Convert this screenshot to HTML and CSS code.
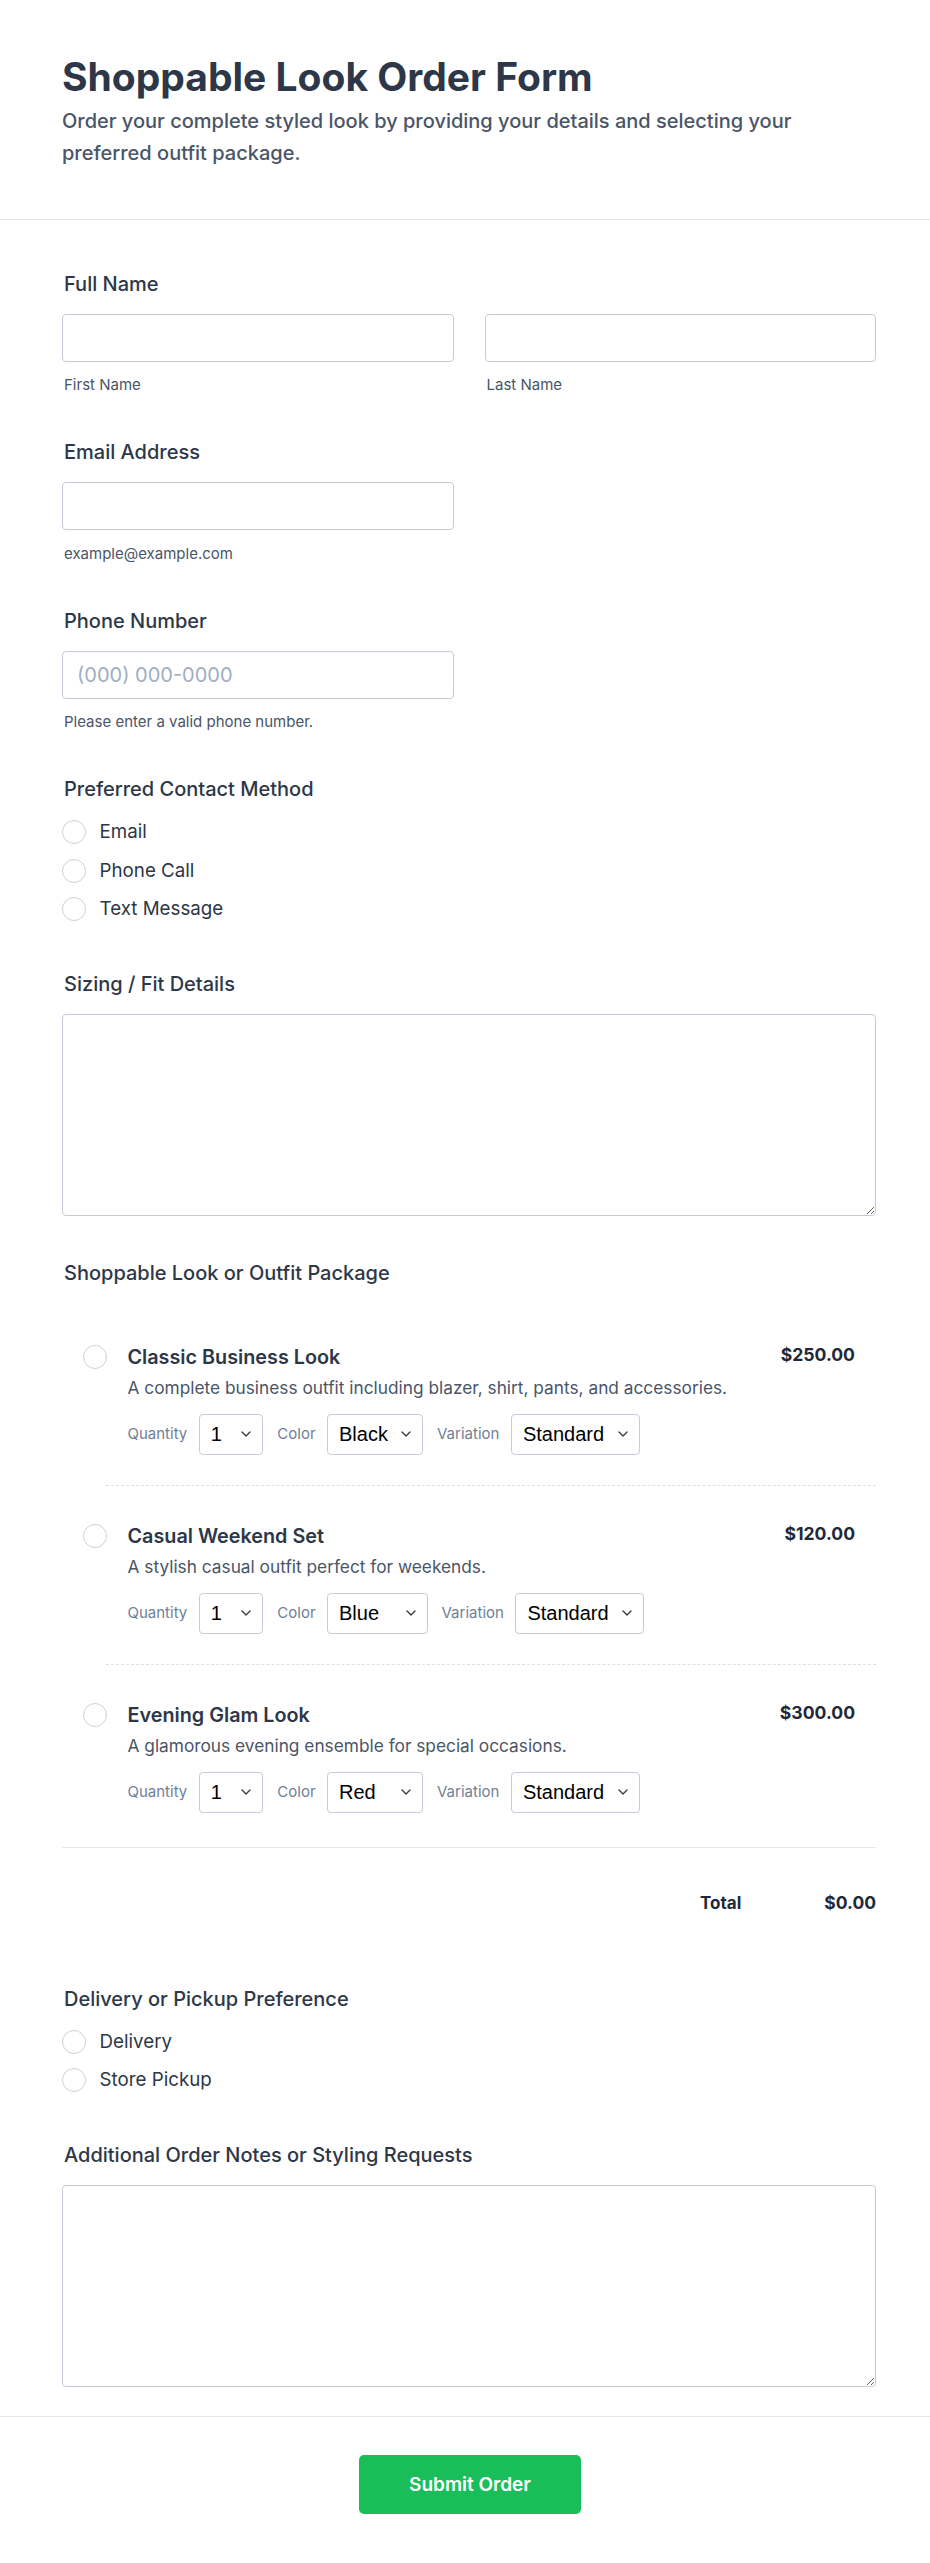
FILE: index.html
```html
<!DOCTYPE html>
<html lang="en">
<head>
<meta charset="utf-8">
<title>Shoppable Look Order Form</title>
<link rel="stylesheet" href="styles.css">
</head>
<body>
<header class="hdr">
  <h1 class="title">Shoppable Look Order Form</h1>
  <p class="subtitle">Order your complete styled look by providing your details and selecting your preferred outfit package.</p>
</header>

<form class="form">
  <div class="field">
    <label class="label">Full Name</label>
    <div class="grid2">
      <div>
        <input class="input" type="text">
        <div class="sub">First Name</div>
      </div>
      <div>
        <input class="input" type="text">
        <div class="sub">Last Name</div>
      </div>
    </div>
  </div>

  <div class="field">
    <label class="label">Email Address</label>
    <input class="input half" type="email">
    <div class="sub">example@example.com</div>
  </div>

  <div class="field">
    <label class="label">Phone Number</label>
    <input class="input half" type="tel" placeholder="(000) 000-0000">
    <div class="sub">Please enter a valid phone number.</div>
  </div>

  <div class="field field-radios">
    <label class="label">Preferred Contact Method</label>
    <div class="radios">
      <label class="radio-row"><input class="radio" type="radio" name="contact"><span>Email</span></label>
      <label class="radio-row"><input class="radio" type="radio" name="contact"><span>Phone Call</span></label>
      <label class="radio-row"><input class="radio" type="radio" name="contact"><span>Text Message</span></label>
    </div>
  </div>

  <div class="field">
    <label class="label">Sizing / Fit Details</label>
    <textarea class="textarea"></textarea>
  </div>

  <div class="field field-package">
    <label class="label">Shoppable Look or Outfit Package</label>
    <div class="items">
      <div class="item">
        <input class="radio item-radio" type="radio" name="look">
        <div class="item-body">
          <div class="item-head">
            <span class="item-title">Classic Business Look</span>
            <span class="item-price">$250.00</span>
          </div>
          <div class="item-desc">A complete business outfit including blazer, shirt, pants, and accessories.</div>
          <div class="opts">
            <div class="opt"><span class="opt-label">Quantity</span>
              <span class="sel-wrap"><select class="sel sel-qty"><option>1</option><option>2</option><option>3</option></select><svg class="chev" width="10" height="6" viewBox="0 0 10 6"><polyline points="1,1 5,5 9,1" fill="none" stroke="#3c3c3c" stroke-width="1.4" stroke-linecap="round" stroke-linejoin="round"/></svg></span></div>
            <div class="opt"><span class="opt-label">Color</span>
              <span class="sel-wrap"><select class="sel sel-color"><option>Black</option><option>Navy</option><option>Gray</option></select><svg class="chev" width="10" height="6" viewBox="0 0 10 6"><polyline points="1,1 5,5 9,1" fill="none" stroke="#3c3c3c" stroke-width="1.4" stroke-linecap="round" stroke-linejoin="round"/></svg></span></div>
            <div class="opt"><span class="opt-label">Variation</span>
              <span class="sel-wrap"><select class="sel sel-var"><option>Standard</option><option>Premium</option></select><svg class="chev" width="10" height="6" viewBox="0 0 10 6"><polyline points="1,1 5,5 9,1" fill="none" stroke="#3c3c3c" stroke-width="1.4" stroke-linecap="round" stroke-linejoin="round"/></svg></span></div>
          </div>
        </div>
      </div>
      <div class="sep"></div>
      <div class="item">
        <input class="radio item-radio" type="radio" name="look">
        <div class="item-body">
          <div class="item-head">
            <span class="item-title">Casual Weekend Set</span>
            <span class="item-price">$120.00</span>
          </div>
          <div class="item-desc">A stylish casual outfit perfect for weekends.</div>
          <div class="opts">
            <div class="opt"><span class="opt-label">Quantity</span>
              <span class="sel-wrap"><select class="sel sel-qty"><option>1</option><option>2</option><option>3</option></select><svg class="chev" width="10" height="6" viewBox="0 0 10 6"><polyline points="1,1 5,5 9,1" fill="none" stroke="#3c3c3c" stroke-width="1.4" stroke-linecap="round" stroke-linejoin="round"/></svg></span></div>
            <div class="opt"><span class="opt-label">Color</span>
              <span class="sel-wrap"><select class="sel sel-color sel-color-wide"><option>Blue</option><option>Khaki</option><option>Gray</option></select><svg class="chev" width="10" height="6" viewBox="0 0 10 6"><polyline points="1,1 5,5 9,1" fill="none" stroke="#3c3c3c" stroke-width="1.4" stroke-linecap="round" stroke-linejoin="round"/></svg></span></div>
            <div class="opt"><span class="opt-label">Variation</span>
              <span class="sel-wrap"><select class="sel sel-var"><option>Standard</option><option>Premium</option></select><svg class="chev" width="10" height="6" viewBox="0 0 10 6"><polyline points="1,1 5,5 9,1" fill="none" stroke="#3c3c3c" stroke-width="1.4" stroke-linecap="round" stroke-linejoin="round"/></svg></span></div>
          </div>
        </div>
      </div>
      <div class="sep"></div>
      <div class="item">
        <input class="radio item-radio" type="radio" name="look">
        <div class="item-body">
          <div class="item-head">
            <span class="item-title">Evening Glam Look</span>
            <span class="item-price">$300.00</span>
          </div>
          <div class="item-desc">A glamorous evening ensemble for special occasions.</div>
          <div class="opts">
            <div class="opt"><span class="opt-label">Quantity</span>
              <span class="sel-wrap"><select class="sel sel-qty"><option>1</option><option>2</option><option>3</option></select><svg class="chev" width="10" height="6" viewBox="0 0 10 6"><polyline points="1,1 5,5 9,1" fill="none" stroke="#3c3c3c" stroke-width="1.4" stroke-linecap="round" stroke-linejoin="round"/></svg></span></div>
            <div class="opt"><span class="opt-label">Color</span>
              <span class="sel-wrap"><select class="sel sel-color"><option>Red</option><option>Black</option><option>Gold</option></select><svg class="chev" width="10" height="6" viewBox="0 0 10 6"><polyline points="1,1 5,5 9,1" fill="none" stroke="#3c3c3c" stroke-width="1.4" stroke-linecap="round" stroke-linejoin="round"/></svg></span></div>
            <div class="opt"><span class="opt-label">Variation</span>
              <span class="sel-wrap"><select class="sel sel-var"><option>Standard</option><option>Premium</option></select><svg class="chev" width="10" height="6" viewBox="0 0 10 6"><polyline points="1,1 5,5 9,1" fill="none" stroke="#3c3c3c" stroke-width="1.4" stroke-linecap="round" stroke-linejoin="round"/></svg></span></div>
          </div>
        </div>
      </div>
    </div>
    <div class="total">
      <span class="total-label">Total</span>
      <span class="total-value">$0.00</span>
    </div>
  </div>

  <div class="field field-radios">
    <label class="label">Delivery or Pickup Preference</label>
    <div class="radios">
      <label class="radio-row"><input class="radio" type="radio" name="delivery"><span>Delivery</span></label>
      <label class="radio-row"><input class="radio" type="radio" name="delivery"><span>Store Pickup</span></label>
    </div>
  </div>

  <div class="field field-last">
    <label class="label">Additional Order Notes or Styling Requests</label>
    <textarea class="textarea"></textarea>
  </div>
</form>

<footer class="foot">
  <button class="btn" type="button">Submit Order</button>
</footer>
</body>
</html>
```

FILE: styles.css
```css
* { box-sizing: border-box; }

html, body {
  margin: 0;
  padding: 0;
  background: #ffffff;
}

body {
  font-family: Inter, "Noto Sans", "Liberation Sans", sans-serif;
  color: #2d3748;
}

.hdr {
  padding: 54px 54px 50px 62px;
  border-bottom: 1px solid #e2e8f0;
}

.title {
  margin: 0;
  font-size: 39px;
  line-height: 46px;
  font-weight: 700;
  color: #2d3748;
}

.subtitle {
  margin: 5px 0 0;
  max-width: 790px;
  font-size: 20px;
  line-height: 32px;
  font-weight: 500;
  color: #4a5568;
}

.form {
  padding: 48.75px 54px 29.25px 62px;
}

.field {
  margin-bottom: 42px;
}

.field-radios {
  margin-bottom: 47.5px;
}

.field-package {
  margin-bottom: 0;
}

.field-last {
  margin-bottom: 0;
}

.label {
  display: block;
  padding-left: 2px;
  font-size: 20px;
  line-height: 30px;
  font-weight: 500;
  color: #2d3748;
  margin-bottom: 15px;
}

.grid2 {
  display: grid;
  grid-template-columns: 1fr 1fr;
  column-gap: 31px;
}

.input {
  display: block;
  width: 100%;
  height: 48px;
  padding: 0 14px;
  border: 1px solid #c6ccd7;
  border-radius: 4px;
  font-family: Inter, "Noto Sans", sans-serif;
  font-size: 20px;
  color: #2d3748;
  background: #fff;
  outline: none;
}

.input::placeholder {
  color: #a0aec0;
}

.half {
  width: calc((100% - 31px) / 2);
}

.sub {
  margin-top: 12.5px;
  padding-left: 2px;
  font-size: 15px;
  line-height: 21px;
  color: #4a5568;
}

.radios {
  display: flex;
  flex-direction: column;
  gap: 14.5px;
  margin-top: 16px;
}

.radio-row {
  display: flex;
  align-items: center;
  gap: 13.5px;
  height: 24px;
  font-size: 18.75px;
  line-height: 24px;
  color: #2d3748;
}

.radio {
  appearance: none;
  -webkit-appearance: none;
  margin: 0;
  flex: 0 0 24px;
  width: 24px;
  height: 24px;
  border: 1px solid #cbd1da;
  border-radius: 50%;
  background: #fff;
}

.textarea {
  display: block;
  width: 100%;
  height: 202px;
  border: 1px solid #c6ccd7;
  border-radius: 4px;
  padding: 10px 14px;
  font-family: Inter, "Noto Sans", sans-serif;
  font-size: 18px;
  resize: vertical;
  outline: none;
}

.items {
  margin-top: 19px;
  padding-bottom: 4.5px;
  border-bottom: 1px solid #e2e8f0;
}

.item {
  display: flex;
  align-items: flex-start;
  gap: 20.5px;
  padding: 36px 21px 30px 21px;
}

.item-radio {
  margin-top: 2px;
}

.item-body {
  flex: 1;
  min-width: 0;
}

.item-head {
  display: flex;
  justify-content: space-between;
  align-items: flex-start;
}

.item-title {
  font-size: 19.8px;
  line-height: 28px;
  font-weight: 600;
  color: #2d3748;
}

.item-price {
  font-size: 17.6px;
  line-height: 24px;
  font-weight: 700;
  color: #1f2937;
}

.item-desc {
  margin-top: 4.5px;
  font-size: 17.3px;
  line-height: 26px;
  color: #4a5568;
}

.opts {
  display: flex;
  align-items: center;
  gap: 14px;
  margin-top: 12.5px;
}

.opt {
  display: flex;
  align-items: center;
  gap: 11.5px;
}

.opt-label {
  font-size: 15px;
  line-height: 20px;
  color: #718096;
}

.sel-wrap {
  position: relative;
  display: inline-flex;
}

.sel {
  appearance: none;
  -webkit-appearance: none;
  height: 41px;
  padding: 0 0 0 11px;
  border: 1px solid #c6ccd7;
  border-radius: 4px;
  background-color: #fff;
  font-family: "Liberation Sans", Arial, sans-serif;
  font-size: 20px;
  color: #000;
  outline: none;
}

.chev {
  position: absolute;
  right: 12px;
  top: 50%;
  margin-top: -3px;
  pointer-events: none;
}

.sel-qty { width: 64.5px; }
.sel-color { width: 96px; }
.sel-color-wide { width: 100.5px; }
.sel-var { width: 129px; }

.sep {
  margin-left: 44px;
  border-top: 1px dashed #dde1e7;
}

.total {
  display: flex;
  justify-content: flex-end;
  align-items: baseline;
  gap: 83px;
  margin: 41px 0 66.5px;
  line-height: 28px;
  font-weight: 700;
  color: #1f2937;
}

.total-label {
  font-size: 17px;
}

.total-value {
  font-size: 17.5px;
}

.foot {
  border-top: 1px solid #e5e7eb;
  padding: 38px 53px 50px 63px;
  text-align: center;
}

.btn {
  width: 222px;
  height: 59px;
  border: none;
  border-radius: 5px;
  background: #19be5b;
  color: #ffffff;
  font-family: Inter, "Noto Sans", sans-serif;
  font-size: 19px;
  font-weight: 600;
}
```
